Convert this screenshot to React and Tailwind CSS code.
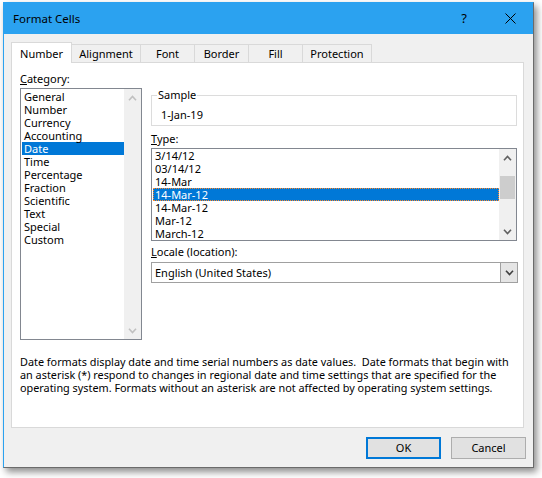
import React from 'react';

const categories = ['General', 'Number', 'Currency', 'Accounting', 'Date', 'Time', 'Percentage', 'Fraction', 'Scientific', 'Text', 'Special', 'Custom'];
const types = ['3/14/12', '03/14/12', '14-Mar', '14-Mar-12', '14-Mar-12', 'Mar-12', 'March-12'];
const tabs = [
  { label: 'Number', w: 'w-[61px]' },
  { label: 'Alignment', w: 'w-[69px]' },
  { label: 'Font', w: 'w-[54px]' },
  { label: 'Border', w: 'w-[54px]' },
  { label: 'Fill', w: 'w-[54px]' },
  { label: 'Protection', w: 'w-[69px]' },
];

const Chevron = ({ dir = 'down', className = '' }) => (
  <svg width="9" height="6" viewBox="0 0 9 6" className={className}>
    <path d={dir === 'up' ? 'M1 5.2L4.5 1.5L8 5.2' : 'M1 0.8L4.5 4.5L8 0.8'} fill="none" stroke="currentColor" strokeWidth="1.6" />
  </svg>
);

// --- SCROLLBAR (vertical, classic) ---
const ScrollBar = ({ disabled, thumb }) => (
  <div className="w-[17px] h-full bg-[#f0f0f0] flex flex-col">
    <div className={`h-[17px] flex items-center justify-center ${disabled ? 'text-[#c0c0c0]' : 'text-[#606060]'}`}>
      <Chevron dir="up" />
    </div>
    <div className="flex-1 px-[1px] pt-[10px]">
      {thumb && <div className="h-[23px] bg-[#cdcdcd]" />}
    </div>
    <div className={`h-[17px] flex items-center justify-center ${disabled ? 'text-[#c0c0c0]' : 'text-[#606060]'}`}>
      <Chevron dir="down" />
    </div>
  </div>
);

export default function App() {
  return (
    <div className="w-[542px] h-[478px] bg-white pt-[2px] pl-[3px] font-['Noto_Sans',sans-serif] text-[11px] text-black">
      <div className="w-[531px] h-[466px] border border-[#2ba2f0] border-r-[#6b6b6b] border-b-[#6b6b6b] bg-[#f0f0f0] shadow-[3px_4px_7px_rgba(0,0,0,0.45)] flex flex-col">
        {/* title bar */}
        <div className="h-[31px] bg-[#2ba2f0] flex items-center">
          <span className="pl-[9px] text-[11.5px] flex-1">Format Cells</span>
          <div className="w-[46px] h-full flex items-center justify-center text-[13px]">?</div>
          <div className="w-[46px] h-full flex items-center justify-center">
            <svg width="11" height="11" viewBox="0 0 11 11"><path d="M0.5 0.5L10.5 10.5M10.5 0.5L0.5 10.5" stroke="#000" strokeWidth="1" /></svg>
          </div>
        </div>

        <div className="flex-1 pt-[8px] pl-[7px]">
          {/* tabs */}
          <div className="flex items-end h-[21px] relative z-10">
            {tabs.map((t, i) =>
              i === 0 ? (
                <div key={t.label} className={`${t.w} h-[21px] bg-white border-l border-t border-r border-[#d9d9d9] text-center pt-[4px] leading-[14px]`}>{t.label}</div>
              ) : (
                <div key={t.label} className={`${t.w} h-[18px] mb-px border-t border-r border-[#d9d9d9] text-center pt-[2px] leading-[14px]`}>{t.label}</div>
              )
            )}
          </div>

          {/* panel */}
          <div className="w-[513px] h-[366px] -mt-px bg-white border border-[#d9d9d9]">
            <div className="flex">
              <div className="pl-[8px] pt-[9px]">
                <div className="leading-[14px]"><span className="underline">C</span>ategory:</div>
                <div className="mt-[2px] w-[122px] h-[252px] border border-[#828790] flex">
                  <div className="flex-1 pt-[1px] pl-[1px]">
                    {categories.map((c) => (
                      <div key={c} className={`h-[13px] leading-[13px] pl-[2px] ${c === 'Date' ? 'bg-[#0078d7] text-white' : ''}`}>{c}</div>
                    ))}
                  </div>
                  <ScrollBar disabled />
                </div>
              </div>

              <div className="ml-[9px] pt-[25px] w-[366px]">
                <fieldset className="border border-[#dcdcdc] pb-[3px] pl-[9px]">
                  <legend className="ml-[-4px] px-[1px] leading-[14px]">Sample</legend>
                  <div className="mt-[6px] leading-[14px]">1-Jan-19</div>
                </fieldset>

                <div className="mt-[6px] leading-[14px]"><span className="underline">T</span>ype:</div>
                <div className="mt-[2px] h-[93px] border border-[#828790] flex">
                  <div className="flex-1 pl-[1px]">
                    {types.map((t, i) => (
                      <div key={i} className={`h-[13px] leading-[13px] pl-[2px] ${i === 3 ? 'bg-[#0078d7] text-white outline-1 outline-dotted -outline-offset-1 outline-[#ff8728]' : ''}`}>{t}</div>
                    ))}
                  </div>
                  <ScrollBar thumb />
                </div>

                <div className="mt-[4px] leading-[14px]"><span className="underline">L</span>ocale (location):</div>
                <div className="mt-[3px] w-[367px] h-[21px] border border-[#a0a0a0] flex items-stretch">
                  <div className="flex-1 pl-[3px] leading-[19px]">English (United States)</div>
                  <div className="w-[17px] bg-[#e5e5e5] border-l border-[#a0a0a0] flex items-center justify-center text-[#404040]">
                    <Chevron dir="down" />
                  </div>
                </div>
              </div>
            </div>

            <p className="mt-[15px] pl-[8px] leading-[13px] text-[10.85px] whitespace-nowrap">
              Date formats display date and time serial numbers as date values.&nbsp; Date formats that begin with<br />
              an asterisk (*) respond to changes in regional date and time settings that are specified for the<br />
              operating system. Formats without an asterisk are not affected by operating system settings.
            </p>
          </div>

          {/* buttons */}
          <div className="mt-[9px] pr-[7px] flex justify-end gap-[10px]">
            <button className="w-[75px] h-[22px] bg-[#e1e1e1] border-2 border-[#0078d7] leading-[18px]">OK</button>
            <button className="w-[75px] h-[22px] bg-[#e1e1e1] border border-[#adadad] leading-[20px]">Cancel</button>
          </div>
        </div>
      </div>
    </div>
  );
}
